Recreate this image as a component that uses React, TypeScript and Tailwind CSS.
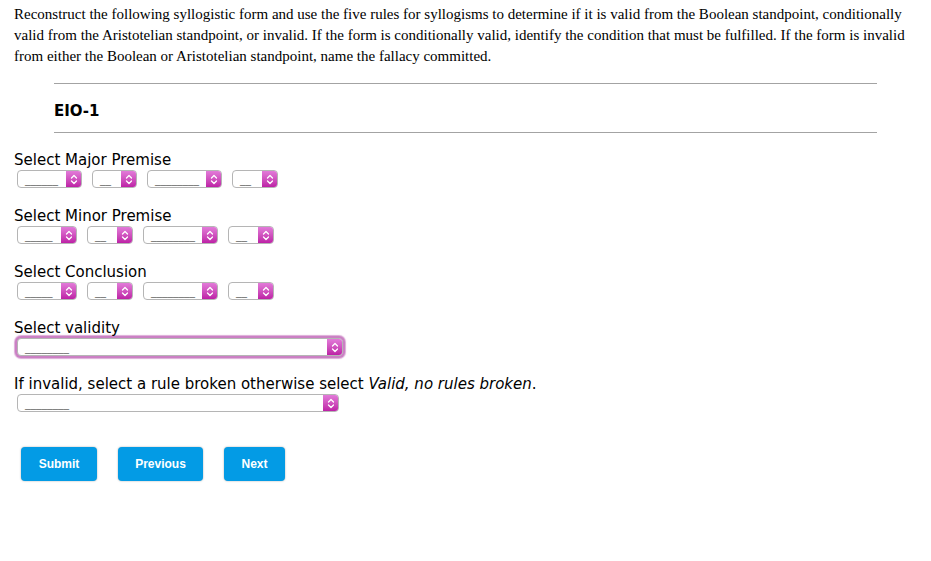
import React from "react";

const SERIF = { fontFamily: '"Liberation Serif", "Times New Roman", serif' };

function Arrows() {
  return (
    <svg width="8" height="11" viewBox="0 0 8 11" fill="none" stroke="white" strokeWidth="1.3" strokeLinecap="round" strokeLinejoin="round">
      <path d="M1.5 4 L4 1.5 L6.5 4" />
      <path d="M1.5 7 L4 9.5 L6.5 7" />
    </svg>
  );
}

function FakeSelect({ width, blanks, className = "" }: { width: number; blanks: number; className?: string }) {
  return (
    <div
      className={`flex h-[18px] shrink-0 items-stretch overflow-hidden rounded-[4px] border border-[#b5b5b5] bg-white ${className}`}
      style={{ width }}
    >
      <div className="flex flex-1 items-end overflow-hidden pb-[1px] pl-[7px] text-[11px] leading-[13px] text-[#666]">
        {"_".repeat(blanks)}
      </div>
      <div className="flex w-[15px] items-center justify-center bg-gradient-to-b from-[#e27ad9] to-[#bd1fa6]">
        <Arrows />
      </div>
    </div>
  );
}

function Row({ items }: { items: [number, number][] }) {
  return (
    <div className="mt-[1px] ml-[3px] flex gap-[10px]">
      {items.map(([w, b], i) => (
        <FakeSelect key={i} width={w} blanks={b} />
      ))}
    </div>
  );
}

function Label({ children }: { children: React.ReactNode }) {
  return <div className="text-[15px] leading-[18px] text-black">{children}</div>;
}

export default function App() {
  return (
    <div className="min-h-screen bg-white px-[14px] pt-[4px] text-black" style={{ fontFamily: '"DejaVu Sans", Verdana, sans-serif' }}>
      <p className="text-[15px] leading-[21px] text-black" style={SERIF}>
        Reconstruct the following syllogistic form and use the five rules for syllogisms to determine if it is valid from the Boolean standpoint, conditionally valid from the Aristotelian standpoint, or invalid. If the form is conditionally valid, identify the condition that must be fulfilled. If the form is invalid from either the Boolean or Aristotelian standpoint, name the fallacy committed.
      </p>

      <div className="mx-[40px] mt-[16px]">
        <div className="border-t border-[#a3a3a3]" />
        <div className="mt-[18px] mb-[12px] text-[15px] font-bold leading-[18px]">EIO-1</div>
        <div className="border-t border-[#a3a3a3]" />
      </div>

      <div className="mt-[18px]">
        <Label>Select Major Premise</Label>
        <Row items={[[65, 6], [45, 2], [75, 8], [46, 2]]} />
      </div>

      <div className="mt-[19px]">
        <Label>Select Minor Premise</Label>
        <Row items={[[60, 5], [46, 2], [75, 8], [46, 2]]} />
      </div>

      <div className="mt-[19px]">
        <Label>Select Conclusion</Label>
        <Row items={[[60, 5], [46, 2], [75, 8], [46, 2]]} />
      </div>

      <div className="mt-[19px]">
        <Label>Select validity</Label>
        <div className="mt-[1px] ml-[3px]">
          <FakeSelect width={326} blanks={8} className="shadow-[0_0_0_2px_#cb80c4,0_0_1px_3px_#dcaad7]" />
        </div>
      </div>

      <div className="mt-[19px]">
        <Label>
          If invalid, select a rule broken otherwise select <i>Valid, no rules broken</i>.
        </Label>
        <div className="mt-[1px] ml-[3px]">
          <FakeSelect width={322} blanks={8} />
        </div>
      </div>

      <div className="mt-[35px] ml-[7px] flex gap-[21px]" style={{ fontFamily: '"Liberation Sans", Arial, sans-serif' }}>
        {[
          ["Submit", 76],
          ["Previous", 85],
          ["Next", 61],
        ].map(([t, w]) => (
          <button
            key={t as string}
            className="h-[34px] rounded-[4px] bg-[#039be5] text-[12px] font-bold text-white shadow-[0_0_2px_rgba(0,0,0,0.35)]"
            style={{ width: w as number }}
          >
            {t}
          </button>
        ))}
      </div>
    </div>
  );
}
